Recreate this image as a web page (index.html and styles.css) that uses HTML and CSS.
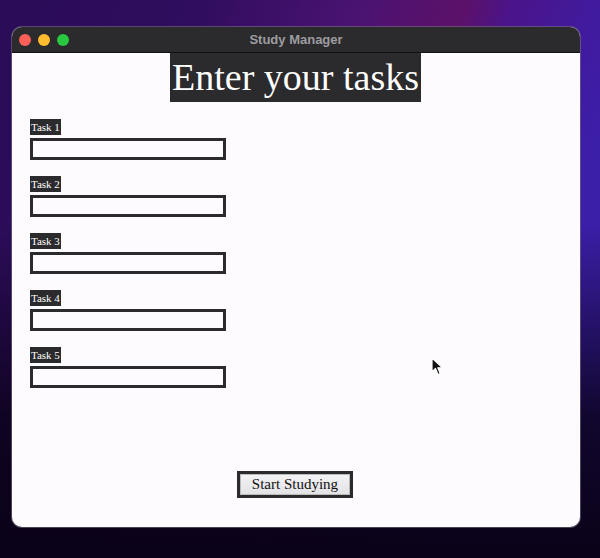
FILE: index.html
```html
<!DOCTYPE html>
<html>
<head>
<meta charset="utf-8">
<link rel="stylesheet" href="styles.css">
</head>
<body>
<div class="window">
  <div class="titlebar">
    <div class="lights">
      <span class="light red"></span>
      <span class="light yellow"></span>
      <span class="light green"></span>
    </div>
    <div class="wtitle">Study Manager</div>
  </div>
  <div class="content">
    <div class="heading-row"><h1 class="heading">Enter your tasks</h1></div>
    <div class="tasks">
      <div class="task"><label class="tlabel">Task 1</label><input class="tinput" type="text"></div>
      <div class="task"><label class="tlabel">Task 2</label><input class="tinput" type="text"></div>
      <div class="task"><label class="tlabel">Task 3</label><input class="tinput" type="text"></div>
      <div class="task"><label class="tlabel">Task 4</label><input class="tinput" type="text"></div>
      <div class="task"><label class="tlabel">Task 5</label><input class="tinput" type="text"></div>
    </div>
    <div class="actions"><button class="start">Start Studying</button></div>
  </div>
</div>
<svg class="cursor" width="14" height="20" viewBox="0 0 14 20"><path d="M1 1 L1 15 L4.5 11.5 L7 17.5 L9.2 16.6 L6.8 10.8 L11.5 10.8 Z" fill="#111" stroke="#fff" stroke-width="1.2" stroke-linejoin="round"/></svg>
</body>
</html>
```
FILE: styles.css
```css
html, body { margin: 0; padding: 0; }
body {
  width: 600px;
  height: 558px;
  box-sizing: border-box;
  padding: 27px 20px 31px 12px;
  position: relative;
  overflow: hidden;
  background:
    linear-gradient(180deg, rgba(10,2,24,0) 0%, rgba(10,2,24,0) 40%, rgba(10,2,24,0.85) 75%, #0a0218 100%),
    linear-gradient(110deg, #2a0c58 0%, #300d5e 25%, #4a1372 45%, #5c1168 58%, #4a148a 64%, #3c1ea8 80%, #3a20a8 100%);
  font-family: "Liberation Serif", "Times New Roman", serif;
}
.window {
  width: 568px;
  height: 500px;
  border-radius: 10px;
  overflow: hidden;
  display: flex;
  flex-direction: column;
  background: #fdfbfd;
  box-shadow: 0 0 0 1px rgba(120,110,130,0.6);
}
.titlebar {
  height: 26px;
  flex: none;
  background: #2b2a2d;
  display: flex;
  align-items: center;
  position: relative;
  border-bottom: 1px solid #111;
  box-sizing: border-box;
}
.lights { display: flex; gap: 7px; padding-left: 7px; }
.light { width: 12px; height: 12px; border-radius: 50%; display: block; }
.red { background: #fe5f57; }
.yellow { background: #febc2e; }
.green { background: #28c840; }
.wtitle {
  position: absolute;
  left: 0; right: 0; top: 0; bottom: 0;
  display: flex; align-items: center; justify-content: center;
  font-family: "Liberation Sans", Arial, sans-serif;
  font-weight: bold;
  font-size: 13px;
  color: #9d9ca0;
}
.content {
  flex: 1;
  display: flex;
  flex-direction: column;
  padding: 0 18px 29px 18px;
}
.heading-row { display: flex; justify-content: center; padding-right: 1px; }
.heading {
  margin: 0;
  background: #2b2a2d;
  color: #ffffff;
  font-weight: normal;
  font-size: 38px;
  line-height: 49px;
  padding: 0 2px;
  white-space: nowrap;
}
.tasks { display: flex; flex-direction: column; gap: 16px; margin-top: 17px; }
.task { display: flex; flex-direction: column; align-items: flex-start; gap: 3px; }
.tlabel {
  background: #2b2a2d;
  color: #fff;
  font-size: 11px;
  line-height: 16px;
  padding: 0 1px;
  white-space: nowrap;
}
.tinput {
  width: 196px;
  height: 22px;
  box-sizing: border-box;
  border: 3px solid #2b2a2d;
  background: #fdfbfd;
  margin: 0;
  padding: 0;
}
.actions { margin-top: auto; display: flex; justify-content: center; padding-right: 2px; }
.start {
  width: 116px;
  height: 27px;
  box-sizing: border-box;
  border: 3px solid #2b2a2d;
  background: linear-gradient(#f4f3f5, #e2e1e4);
  font-family: "Liberation Serif", "Times New Roman", serif;
  font-size: 15px;
  color: #111;
  padding: 0;
  box-shadow: inset 0 0 0 1px #bbb;
}
.cursor { position: absolute; left: 431px; top: 357px; }
```
